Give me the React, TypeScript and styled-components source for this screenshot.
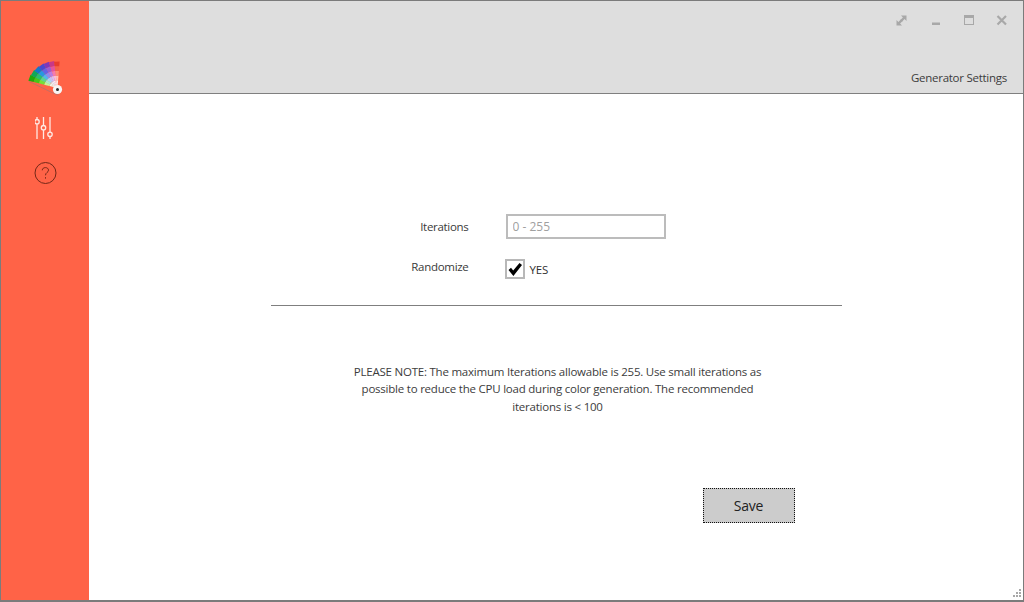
import React from "react";
import styled, { createGlobalStyle } from "styled-components";

const Global = createGlobalStyle`
  html, body { margin: 0; padding: 0; height: 100%; background: #fff; overflow: hidden; }
  #root { height: 100%; }
  * { box-sizing: border-box; }
`;

const Window = styled.div`
  position: relative;
  width: 1024px;
  height: 602px;
  display: flex;
  background: #fff;
  border: 1px solid #7b7b7b;
  border-bottom-width: 2px;
  font-family: "Open Sans", "Noto Sans", "Liberation Sans", sans-serif;
  color: #3a3a3a;
`;

const Sidebar = styled.nav`
  width: 88px;
  flex: none;
  background: #ff6347;
  display: flex;
  flex-direction: column;
  align-items: center;
  padding-top: 59px;
`;

const NavIcon = styled.svg<{ $gap: number }>`
  display: block;
  flex: none;
  margin-top: ${(p) => p.$gap}px;
`;

const Body = styled.div`
  flex: 1;
  min-width: 0;
  display: flex;
  flex-direction: column;
`;

const Header = styled.header`
  height: 93px;
  flex: none;
  background: #dedede;
  border-bottom: 1px solid #7f7f7f;
  display: flex;
  flex-direction: column;
  justify-content: space-between;
  align-items: flex-end;
  padding: 14px 16px 0 0;
`;

const WindowControls = styled.div`
  display: flex;
  align-items: flex-start;
`;

const ControlIcon = styled.svg<{ $gap: number }>`
  display: block;
  margin-left: ${(p) => p.$gap}px;
`;

const PageTitle = styled.div`
  font-size: 11.5px;
  letter-spacing: -0.26px;
  line-height: 16px;
  color: #3c3c3c;
  margin-bottom: 7px;
`;

const Main = styled.main`
  flex: 1;
  display: flex;
  flex-direction: column;
  align-items: center;
  padding-top: 120px;
`;

const Panel = styled.div`
  width: 571px;
  display: flex;
  flex-direction: column;
`;

const Form = styled.div`
  display: grid;
  grid-template-columns: 198px 160px;
  column-gap: 37px;
  row-gap: 20px;
  padding-bottom: 26px;
  border-bottom: 1px solid #7f7f7f;
`;

const Label = styled.label<{ $shift: number }>`
  text-align: right;
  font-size: 11.5px;
  letter-spacing: -0.3px;
  line-height: 16px;
  align-self: start;
  margin-top: ${(p) => p.$shift}px;
`;

const TextInput = styled.input`
  width: 160px;
  height: 25px;
  border: 2px solid #bcbcbc;
  padding: 0 5px;
  background: #fff;
  font: inherit;
  font-size: 12px;
  outline: none;
  &::placeholder { color: #a0a0a0; opacity: 1; }
`;

const CheckRow = styled.div`
  display: flex;
  align-items: center;
  margin-left: -1px;
`;

const CheckBox = styled.span`
  width: 20px;
  height: 20px;
  flex: none;
  border: 2px solid #b8b8b8;
  background: #fff;
  display: flex;
  align-items: center;
  justify-content: center;
`;

const CheckText = styled.span`
  margin-left: 5px;
  padding-top: 2px;
  font-size: 11.5px;
  letter-spacing: -0.1px;
  line-height: 16px;
  color: #303030;
`;

const Note = styled.p`
  width: 420px;
  height: 53px;
  margin: 57px auto 0;
  padding-left: 3px;
  text-align: center;
  font-size: 11.5px;
  letter-spacing: -0.22px;
  line-height: 17.25px;
  color: #3c3c3c;
`;

const Actions = styled.div`
  display: flex;
  justify-content: flex-end;
  padding: 72px 47px 0 0;
`;

const SaveButton = styled.button`
  width: 92px;
  height: 35px;
  background: #cccccc;
  border: 1px dotted #111;
  font-family: inherit;
  font-size: 14px;
  letter-spacing: -0.2px;
  color: #222;
  padding: 0;
`;

const SizeGrip = styled.svg`
  position: absolute;
  right: 2px;
  bottom: 3px;
  display: block;
`;

const PX = 30.5;
const PY = 28;

const pt = (r: number, deg: number) => {
  const a = (deg * Math.PI) / 180;
  return `${(PX - r * Math.cos(a)).toFixed(2)} ${(PY - r * Math.sin(a)).toFixed(2)}`;
};

const bladeColors = [
  ["#f0f8e8", "#c4f498", "#74e038", "#44c818", "#24a808"],
  ["#e8f8f0", "#a8eec8", "#58d890", "#28c070", "#10a858"],
  ["#e8f4fc", "#a4dcf8", "#50b8ee", "#2898e0", "#1478c8"],
  ["#eeeefc", "#c0c2f8", "#8a8cf0", "#6464e4", "#4a48d0"],
  ["#f4eafa", "#dcbcf2", "#b87ce4", "#985cd4", "#8038b8"],
  ["#fdeaf2", "#fabcd8", "#f47cb0", "#e4549c", "#c83888"],
  ["#ffece6", "#ffc4b6", "#ff8c74", "#f4604a", "#e83c2c"],
];

const START = 14;
const STEP = 80 / 7;

const Fan = () => (
  <NavIcon $gap={0} width="37" height="37" viewBox="0 0 37 37">
    {bladeColors.map((colors, i) => {
      const a0 = START + i * STEP;
      const a1 = a0 + STEP + 0.6;
      const outer = 30 - (i / 7) * 4;
      return colors.map((c, j) => {
        const r0 = 3 + ((outer - 3) * j) / 5;
        const r1 = 3 + ((outer - 3) * (j + 1)) / 5;
        return (
          <path
            key={`${i}-${j}`}
            d={`M${pt(r0, a0)} L${pt(r1, a0)} L${pt(r1, a1)} L${pt(r0, a1)} Z`}
            fill={c}
          />
        );
      });
    })}
    <path d="M2 21.5L26 33L31.5 35.2" fill="none" stroke="#b8706a" strokeWidth="0.8" />
    <circle cx="30.5" cy="29.5" r="4.6" fill="#f6f6f6" />
    <circle cx="30.5" cy="29.5" r="1.5" fill="#2a2a2a" />
  </NavIcon>
);

const Sliders = () => (
  <NavIcon $gap={20} width="20" height="24" viewBox="0 0 20 24" fill="none" stroke="#ffe9e4" strokeWidth="1.3">
    <path d="M2 0V2.5M2 7V22M8.5 0V8.5M8.5 13V22M15 0V15M15 19.6V22" />
    <circle cx="2" cy="4.7" r="2.2" />
    <circle cx="8.5" cy="10.7" r="2.2" />
    <circle cx="15" cy="17.3" r="2.2" />
  </NavIcon>
);

const Help = () => (
  <NavIcon $gap={20} width="24" height="24" viewBox="0 0 24 24" fill="none" stroke="#742818" strokeWidth="1">
    <circle cx="12.5" cy="12" r="10.5" />
    <path d="M9.3 9.3C9.3 7.5 10.7 6.6 12.4 6.6C14.2 6.6 15.5 7.6 15.5 9.2C15.5 11.4 12.5 11.4 12.5 14.3" />
    <path d="M12.5 16.2V17.6" />
  </NavIcon>
);

export default function App() {
  return (
    <>
      <Global />
      <Window>
        <Sidebar>
          <Fan />
          <Sliders />
          <Help />
        </Sidebar>
        <Body>
          <Header>
            <WindowControls>
              <ControlIcon $gap={0} width="11" height="11" viewBox="0 0 11 11" fill="#a8a8a8">
                <path d="M5 0.5H10.5V6L8.6 4.1L6 6.7L4.3 5L6.9 2.4Z" />
                <path d="M0.5 10.5V5L2.4 6.9L5 4.3L6.7 6L4.1 8.6L6 10.5Z" />
              </ControlIcon>
              <ControlIcon $gap={25} width="9" height="11" viewBox="0 0 9 11" fill="#a8a8a8">
                <rect x="0" y="7.5" width="8" height="2.5" />
              </ControlIcon>
              <ControlIcon $gap={23} width="11" height="11" viewBox="0 0 11 11" fill="none" stroke="#a8a8a8">
                <rect x="0.5" y="0.5" width="9" height="9" />
                <path d="M0.5 2H9.5" strokeWidth="2" />
              </ControlIcon>
              <ControlIcon $gap={21} width="11" height="11" viewBox="0 0 11 11" fill="none" stroke="#a8a8a8" strokeWidth="2.2">
                <path d="M1.5 1L10 9.5M10 1L1.5 9.5" />
              </ControlIcon>
            </WindowControls>
            <PageTitle>Generator Settings</PageTitle>
          </Header>
          <Main>
            <Panel>
              <Form>
                <Label $shift={5}>Iterations</Label>
                <TextInput placeholder="0 - 255" readOnly />
                <Label $shift={0}>Randomize</Label>
                <CheckRow>
                  <CheckBox>
                    <svg width="16" height="15" viewBox="0 0 16 15">
                      <path d="M1.5 8L4 5.8L6.2 8.6L12.5 1L15 3L6.4 14L1.5 8Z" fill="#000" />
                    </svg>
                  </CheckBox>
                  <CheckText>YES</CheckText>
                </CheckRow>
              </Form>
              <Note>
                PLEASE NOTE: The maximum Iterations allowable is 255. Use small iterations as possible to reduce the CPU
                load during color generation. The recommended iterations is &lt; 100
              </Note>
              <Actions>
                <SaveButton>Save</SaveButton>
              </Actions>
            </Panel>
          </Main>
        </Body>
        <SizeGrip width="8" height="8" viewBox="0 0 8 8" fill="#a8a8a8">
          <rect x="6" y="0" width="2" height="2" />
          <rect x="3" y="3" width="2" height="2" />
          <rect x="6" y="3" width="2" height="2" />
          <rect x="0" y="6" width="2" height="2" />
          <rect x="3" y="6" width="2" height="2" />
          <rect x="6" y="6" width="2" height="2" />
        </SizeGrip>
      </Window>
    </>
  );
}
